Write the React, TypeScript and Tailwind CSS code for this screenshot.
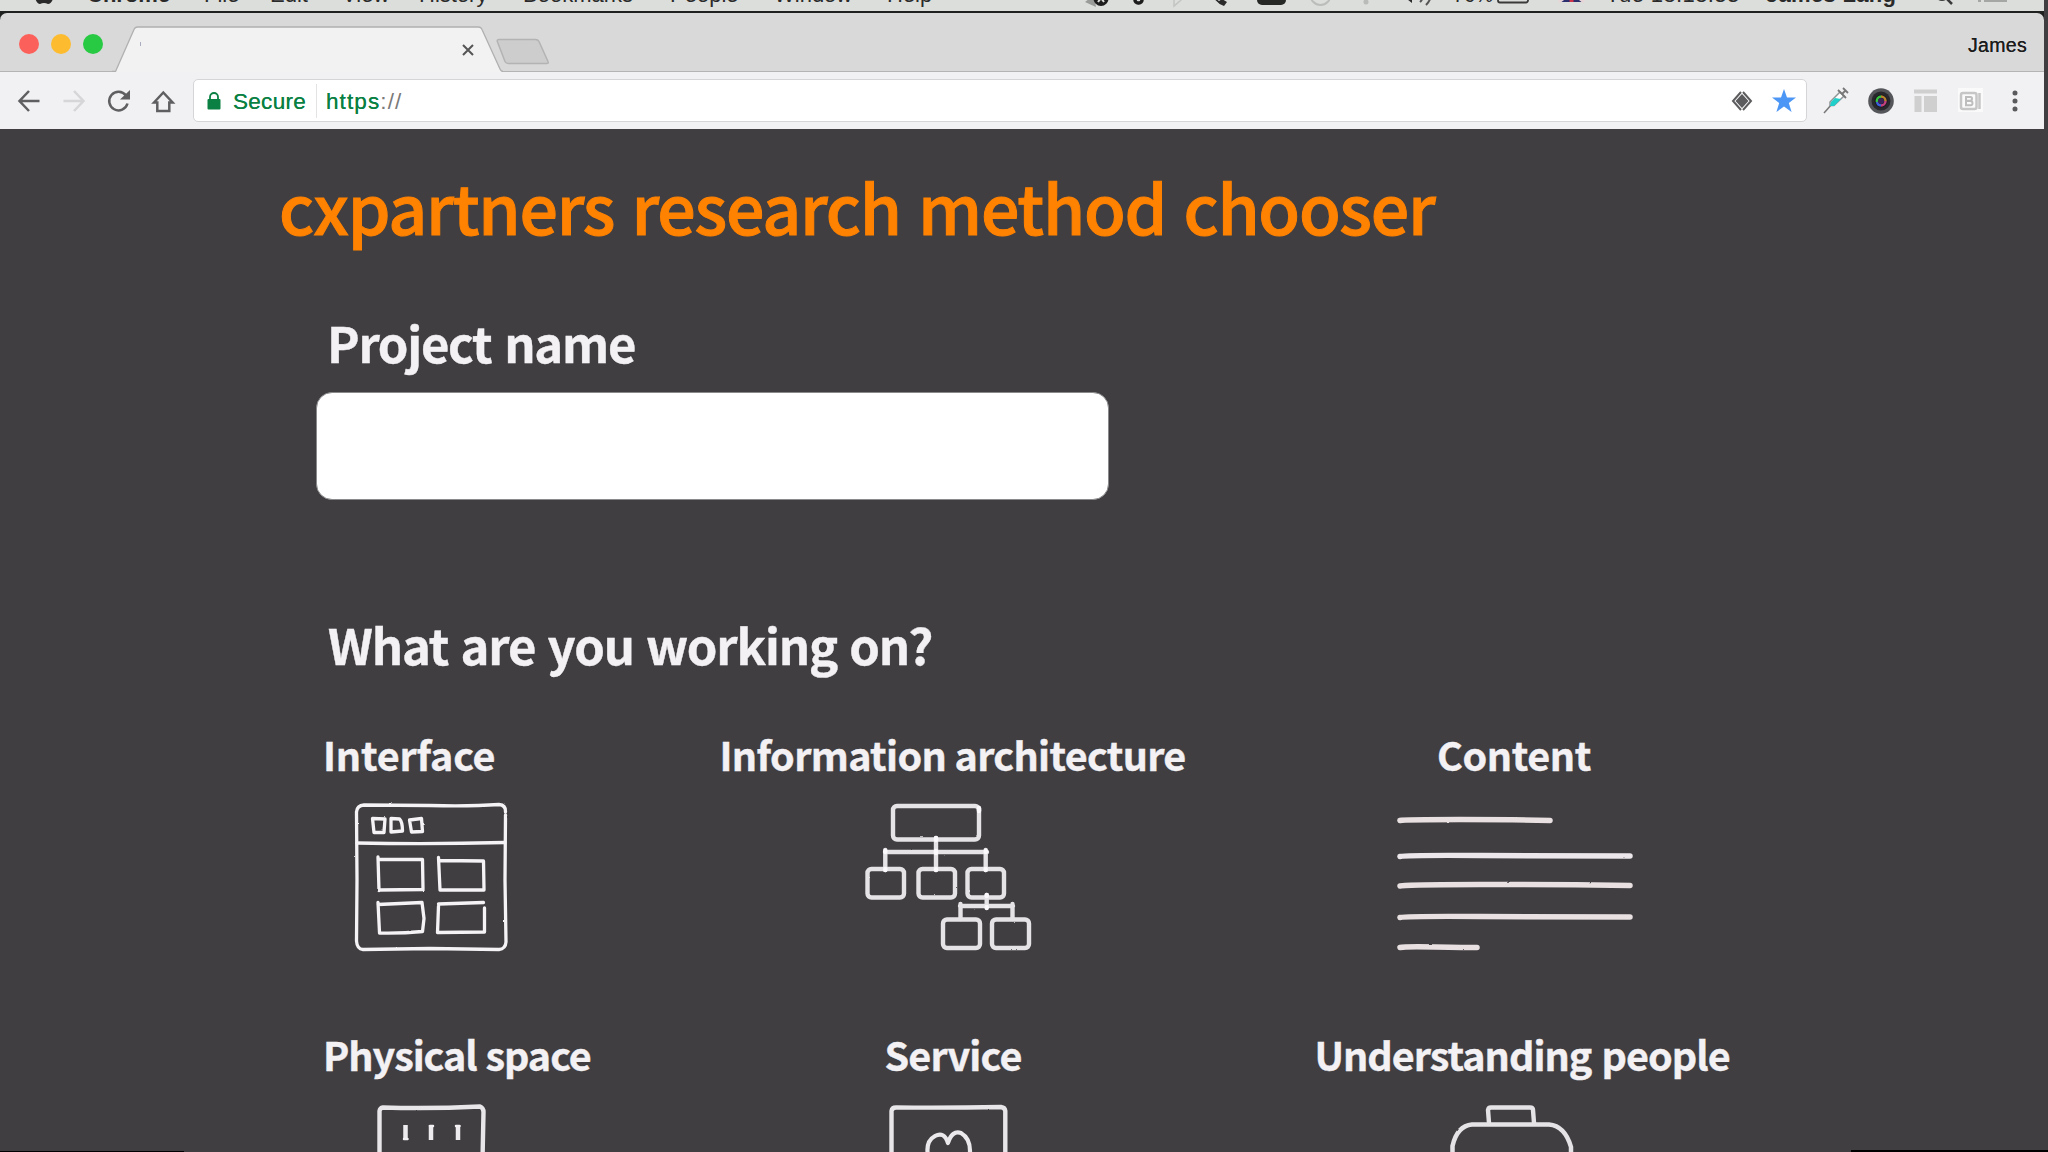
import React from 'react';
import clsx from 'clsx';

const menus = [
  { name: 'Chrome', width: 'w-[117px]', bold: true },
  { name: 'File', width: 'w-[66px]' },
  { name: 'Edit', width: 'w-[72px]' },
  { name: 'View', width: 'w-[77px]' },
  { name: 'History', width: 'w-[104px]' },
  { name: 'Bookmarks', width: 'w-[147px]' },
  { name: 'People', width: 'w-[104px]' },
  { name: 'Window', width: 'w-[113px]' },
  { name: 'Help', width: 'w-[196px]' },
];

function MenuBar() {
  return (
    <div className="h-[11px] w-[2044px] overflow-hidden bg-[#dcdedb] text-[#2a2a2a]">
      <div className="-mt-[18px] flex h-[26px] items-center text-[22px] leading-[26px] whitespace-nowrap">
        <svg className="ml-[35px] mr-[34px] h-[26px] w-[18px] shrink-0" viewBox="0 0 18 26" fill="#2a2a2a">
          <path d="M1 10q3-4 8-2q6-3 8 2q-3 5 1 7q-2 5-5 5q-2-1-4-1t-4 1q-3 0-5-6z" />
        </svg>
        {menus.map((m) => (
          <span key={m.name} className={clsx('shrink-0', m.width, m.bold && 'font-bold')}>{m.name}</span>
        ))}
        <svg className="h-[26px] w-[370px] shrink-0" viewBox="1083 -18 370 26" fill="none">
          <path d="M1085 2l9-7l2 12z" fill="#9a9c9a" />
          <circle cx="1101" cy="-1.500" r="7.500" fill="#1d1d1d" />
          <path d="M1098 2l3-4l3 4" stroke="#dcdedb" strokeWidth="2" />
          <rect x="1135" y="-9" width="7" height="12" rx="3" stroke="#1d1d1d" strokeWidth="3.500" />
          <path d="M1167-3l14-6l-7-6v21l7-6l-14-5" stroke="#c3c5c2" strokeWidth="1.500" />
          <path d="M1212-5q5 9 12 11l3-4l-5-3l-3 2q-2-1-4-5z" fill="#2a2a2a" />
          <rect x="1257" y="-14" width="29" height="19" rx="5" fill="#262826" />
          <circle cx="1320.500" cy="-5" r="10" stroke="#bbbdba" strokeWidth="2" />
          <circle cx="1366" cy="2" r="2.500" fill="#b9bbb8" />
          <path d="M1403-4l9-6v13z" fill="#2a2a2a" />
          <path d="M1420 2q4-4 3-9M1426 5q6-6 5-14" stroke="#555" strokeWidth="2" />
        </svg>
        <span className="w-[44px] shrink-0 text-[20px]">76%</span>
        <svg className="h-[26px] w-[109px] shrink-0" viewBox="1497 -18 109 26" fill="none">
          <rect x="1498" y="-11" width="30" height="13.500" rx="2" stroke="#3a3a3a" strokeWidth="1.800" />
          <path d="M1501-8h18v8h-18z" fill="#9c9e9b" />
          <path d="M1559-13h25v15h-25z" fill="#2b2f6e" />
          <path d="M1559 2l9-7M1584 2l-9-7" stroke="#e8d5d8" strokeWidth="3" />
          <path d="M1571.500-13v15" stroke="#cf3348" strokeWidth="4" />
        </svg>
        <span className="w-[160px] shrink-0 tracking-[0.400px]">Tue 18:18:33</span>
        <span className="w-[170px] shrink-0 font-bold tracking-[0.3px]">James Lang</span>
        <svg className="h-[26px] w-[74px] shrink-0" viewBox="1936 -18 74 26" fill="none">
          <circle cx="1942" cy="-6" r="6" stroke="#3a3a3a" strokeWidth="2" />
          <path d="M1946-2l6 6" stroke="#3a3a3a" strokeWidth="2.500" />
          <path d="M1978 1h3M1984 1h23" stroke="#a5a7a4" strokeWidth="2" />
        </svg>
      </div>
    </div>
  );
}

function TabStrip() {
  return (
    <div className="w-[2044px] bg-[#1f2020] pt-[2px]">
      <div className="flex h-[59px] items-center justify-between rounded-t-[7px] bg-[#d9d9d9] shadow-[inset_0_-1px_0_#b4b4b5]">
        <div className="flex h-full items-center">
          <div className="ml-[19px] flex h-full items-center gap-3 pt-[2px]">
            <span className="size-5 rounded-full bg-[#fc605b]" />
            <span className="size-5 rounded-full bg-[#fdbc2f]" />
            <span className="size-5 rounded-full bg-[#28ca43]" />
          </div>
          <svg className="ml-[9px] h-[59px] w-[442px]" viewBox="112 13 442 59" fill="none">
            <path d="M114 72L115.500 71L134 29.500Q135 27 137.500 27H478.500Q481 27 482 29.500L500 69Q501 71 503 72Z" fill="#f2f2f2" />
            <path d="M112 71.500h3.500L134 29.500Q135 27 137.500 27H478.500Q481 27 482 29.500L500 69Q501 71.500 503 71.500" stroke="#b0b0b0" strokeWidth="1.300" />
            <path d="M140.500 42v4" stroke="#a9adc0" strokeWidth="1" />
            <path d="M463 45l10 10M473 45l-10 10" stroke="#555" strokeWidth="2" />
            <path d="M499 39.500H535.500Q538 39.500 539 41.500L548 61.500Q549 63.500 546.500 63.500H508.500Q506 63.500 505 61.500L497.500 42Q496.500 39.500 499 39.500Z" fill="#cdcdcd" stroke="#b3b3b3" strokeWidth="1.500" />
          </svg>
        </div>
        <span className="mr-[17px] pt-[6px] text-[19.500px] tracking-[0.300px] text-[#1c1c1c] [text-shadow:0_0_0.500px_#1c1c1c]">James</span>
      </div>
    </div>
  );
}

function Toolbar() {
  return (
    <div className="flex h-[57px] w-[2044px] items-center bg-[#f1f1f3]">
      <svg className="h-[56px] w-[193px] shrink-0" viewBox="0 73 193 56" fill="none" stroke="#5f5f61" strokeWidth="2.500">
        <path d="M39.500 101H20M29 91l-9.500 10l9.500 10" />
        <path d="M63.500 101H83M74 91l9.500 10l-9.500 10" stroke="#d6d6d8" />
        <path d="M126 95.500a9.300 9.300 0 1 0 1.500 8" />
        <path d="M130 90v9.500h-10z" fill="#5f5f61" stroke="none" />
        <path d="M154 102.500l9.300-10l9.300 10h-3.300v8.500h-12v-8.500z" />
      </svg>
      <div className="flex h-[43px] w-[1614px] shrink-0 items-center rounded-[5px] border-[1.500px] border-[#d5d5d7] bg-white">
        <svg className="ml-[13px] h-[18px] w-[14px]" viewBox="0 0 14 18" fill="#0b8043">
          <rect x="0.500" y="7" width="13" height="10.500" rx="1" />
          <path d="M3 8V5a4 4 0 0 1 8 0v3" fill="none" stroke="#0b8043" strokeWidth="1.800" />
        </svg>
        <span className="ml-[12px] w-[83px] pt-[3px] text-[22.500px] tracking-[0.300px] text-[#0b8043] [text-shadow:0_0_0.500px_#0b8043]">Secure</span>
        <span className="h-[34px] w-px bg-[#e3e3e5]" />
        <span className="ml-[9px] pt-[3px] text-[22.500px] tracking-[1.100px] text-[#7a7a7a]"><span className="text-[#0b8043] [text-shadow:0_0_0.500px_#0b8043]">https</span>://</span>
        <svg className="mr-[9px] ml-auto h-[26px] w-[66px]" viewBox="1731 88 66 26" fill="none">
          <path d="M1741 92l-8 9l8 9M1743 92l8 9l-8 9" stroke="#5c5c5e" strokeWidth="2" />
          <path d="M1742 94l6.500 7l-6.500 7l-6.500-7z" fill="#5c5c5e" />
          <path d="M1784 89l3 8.500h9l-7.200 5.500l2.800 9l-7.600-5.400l-7.600 5.400l2.800-9l-7.200-5.500h9z" fill="#4c96f5" />
        </svg>
      </div>
      <svg className="h-[56px] w-[237px] shrink-0" viewBox="1807 73 237 56" fill="none">
        <path d="M1824 113l8-9" stroke="#777" strokeWidth="1.500" />
        <path d="M1830 102l10-10l4 4l-10 9.500h-4z" fill="#fff" stroke="#8e9698" strokeWidth="1.500" />
        <path d="M1831 102l4-4l6 1l-7 7h-4z" fill="#20cfc9" />
        <path d="M1838 90l8 8M1842 94l4-4M1843 88l5 5" stroke="#777" strokeWidth="1.800" />
        <circle cx="1881" cy="101" r="12.800" fill="#55565a" />
        <circle cx="1881" cy="101" r="9.500" fill="#29292d" />
        <circle cx="1881" cy="101" r="6.500" fill="#18181f" />
        <path d="M1877 102a4.500 4.500 0 0 1 4-5.500" stroke="#36c63d" strokeWidth="2.500" />
        <path d="M1881 96.500a4.500 4.500 0 0 1 4.500 4.500" stroke="#b8842c" strokeWidth="2.500" />
        <path d="M1885.500 101a4.500 4.500 0 0 1-4.500 4.500" stroke="#c4407e" strokeWidth="2.500" />
        <path d="M1881 105.500a4.500 4.500 0 0 1-4-3.500" stroke="#3d5fd9" strokeWidth="2.500" />
        <circle cx="1881" cy="101" r="3" fill="#3a2458" />
        <path d="M1914 89.500h23v4h-23zM1914.500 96h7v16h-7zM1924 96h13v16h-13z" fill="#cfcfd0" />
        <path d="M1958 88h25v24h-25z" fill="#fafafa" />
        <rect x="1961" y="93" width="15.500" height="16" rx="2" stroke="#c6c6c7" strokeWidth="2.500" />
        <path d="M1979.500 93v16" stroke="#c6c6c7" strokeWidth="2.500" />
        <path d="M1966 97h4.500q1.500 0 1.500 1.800t-2 1.900h-4zm0 4h4.500q2 0 2 2.200t-2 2h-4.500z" stroke="#bdbdbe" strokeWidth="2" />
        <path d="M2015 90.500a2.500 2.500 0 0 1 0 5a2.500 2.500 0 0 1 0-5M2015 98.500a2.500 2.500 0 0 1 0 5a2.500 2.500 0 0 1 0-5M2015 106.500a2.500 2.500 0 0 1 0 5a2.500 2.500 0 0 1 0-5" fill="#5a5a5c" />
      </svg>
    </div>
  );
}

interface SketchProps {
  className: string;
  viewBox: string;
  children: React.ReactNode;
}

// chalk style drawing, edges are roughened a little
function Sketch({ className, viewBox, children }: SketchProps) {
  return (
    <svg className={className} viewBox={viewBox} fill="none" strokeLinecap="round" strokeLinejoin="round">
      <defs>
        <filter id="chalk" x="-5%" y="-5%" width="110%" height="110%">
          <feTurbulence type="fractalNoise" baseFrequency="0.15" numOctaves="2" seed="4" />
          <feDisplacementMap in="SourceGraphic" scale="1.600" xChannelSelector="R" yChannelSelector="G" />
        </filter>
      </defs>
      <g filter="url(#chalk)">{children}</g>
    </svg>
  );
}

function InterfaceIcon() {
  return (
    <Sketch className="ml-[25px] h-[158px] w-[162px]" viewBox="350 798 162 158">
      <g stroke="#f5f3f5" strokeWidth="3.300">
        <path d="M505.500 812Q506 805 499 804.500Q470 806.500 430 805.500L364 805Q357 805.500 356.500 812L357 880L356.500 941Q357 949 363 949.500L430 948.500L499 949.500Q505.500 949 506 942L505 880L505.500 815" />
        <path d="M357 843Q430 844.500 505 842.500" />
        <path d="M372.500 818.500l1.500 14h10l1-13.500zM391 818.500v13.500l11.500-1q0-9-3-12zM409.500 820l2 12l11-.500l-1-13z" />
        <path d="M378 857l1 33.500M378 859.500h44.500l.5 30l-44 .5M438.500 857.500l1.500 32.500M439 860.500l44.500.5l.5 29h-44" />
        <path d="M378 902.500l1.500 30M378 904.500l44-2l2 16l-1.500 13q-21 2-43 1.500M438.500 906l-1 26.500l47-.500v-24M438.500 904l45-1.500" />
      </g>
    </Sketch>
  );
}

function ArchitectureIcon() {
  return (
    <Sketch className="h-[158px] w-[178px]" viewBox="859 798 178 158">
      <g stroke="#e6e3e6" strokeWidth="4.400">
        <rect x="893" y="806" width="86" height="33.500" rx="4" />
        <path d="M885 852h102M936 838v32M885.300 850v20M985.700 850v20" />
        <rect x="867.500" y="869" width="36.500" height="28.500" rx="4" />
        <rect x="918.500" y="869" width="36.500" height="28.500" rx="4" />
        <rect x="967.500" y="869" width="36.500" height="28.500" rx="4" />
        <path d="M986.700 895v12M960 906h53M960.500 904v15M1012.500 904v15" />
        <rect x="943" y="919.500" width="37" height="28.500" rx="4" />
        <rect x="992" y="919.500" width="37" height="28.500" rx="4" />
      </g>
      <path d="M936 838v2M885.300 851v1M985.700 851v1M936 851v2M885.300 869v1M936 869v1M985.700 869v1M986.700 895v1M986.700 907v1M979 808v3" stroke="#fbf9fb" strokeWidth="4.500" />
    </Sketch>
  );
}

function ContentIcon() {
  return (
    <Sketch className="h-[158px] w-[244px]" viewBox="1392 798 244 158">
      <g stroke="#e8e0e1" strokeWidth="5.500">
        <path d="M1400 820.500q4-1 60-1t90 1" />
        <path d="M1400 856.500q8-1.500 80-1t150 .5" stroke="#ebe7ea" />
        <path d="M1400 886q8-1.500 80-1.500t150 1" />
        <path d="M1400 917.500q8-1.500 80-1t150 .5" />
        <path d="M1400 947.500q4-1 35-.5t42 .5" />
      </g>
    </Sketch>
  );
}

function SpaceIcon() {
  return (
    <Sketch className="ml-[45px] h-[60px] w-[122px]" viewBox="370 1100 122 60">
      <path d="M379.500 1160V1111Q380 1108 383 1107.500Q430 1109 480 1106.500Q483.500 1108 483.500 1112L482.500 1160" stroke="#e9e6e9" strokeWidth="4.400" />
      <path d="M405.500 1125v15M431 1125v15M458 1125v15" stroke="#eeebee" strokeWidth="4.500" strokeLinecap="butt" />
      <path d="M404 1139h3.500M430 1126h3M456 1126h3.500" stroke="#f3f1f3" strokeWidth="2.500" />
    </Sketch>
  );
}

function ServiceIcon() {
  return (
    <Sketch className="h-[60px] w-[134px]" viewBox="881 1100 134 60">
      <path d="M891.500 1160V1111Q892 1107.500 896 1107.500Q950 1108 1001 1107Q1005 1107.500 1005.300 1111V1160" stroke="#e9e6e9" strokeWidth="4.400" />
      <path d="M929 1160Q924 1142 935 1136Q944 1131 948 1143Q952 1130 961 1133Q973 1140 969 1160" stroke="#ece9ec" strokeWidth="4.200" />
    </Sketch>
  );
}

function PeopleIcon() {
  return (
    <Sketch className="h-[60px] w-[138px]" viewBox="1443 1100 138 60">
      <path d="M1489 1123L1488 1110Q1488.500 1107 1492 1107.500H1530Q1533 1107.500 1533 1110L1534 1123" stroke="#e6e3e6" strokeWidth="4.400" />
      <path d="M1452.500 1160V1146Q1457 1126 1472 1124.500H1549Q1565 1126 1571 1147V1160" stroke="#e6e3e6" strokeWidth="4.500" />
    </Sketch>
  );
}

export default function App() {
  return (
    <div className="relative h-[1152px] w-[2048px] overflow-hidden bg-[#403e41] font-['Liberation_Sans',sans-serif]">
      <header>
        <MenuBar />
        <TabStrip />
        <Toolbar />
      </header>

      <main className="pt-[43px] font-['Noto_Sans_CJK_SC',sans-serif] leading-none font-bold whitespace-nowrap text-[#f3f1f4] [-webkit-text-stroke:0.400px_#f3f1f4]">
        <h1 className="ml-[279px] h-[68px] text-[68px] leading-[68px] font-medium tracking-[-1.260px] [word-spacing:3.300px] text-[#ff8200] [-webkit-text-stroke:1px_#ff8200]">
          cxpartners research method chooser
        </h1>

        <label className="mt-[77px] ml-[327px] block h-[49px] text-[49px] leading-[49px] tracking-[-1.300px] [word-spacing:3px]">Project name</label>
        <div className="mt-[26px] ml-[316px] h-[108px] w-[793px] rounded-[16px] border border-[#8a898b] bg-white" />

        <h2 className="mt-[119px] ml-[328px] h-[49px] text-[49px] leading-[49px] tracking-[-1.150px] [word-spacing:2.300px]">What are you working on?</h2>

        <section className="mt-[66px] ml-[325px] flex h-[300px] text-[39.500px] leading-[40px]">
          <div className="w-[397px]">
            <h3 className="-ml-[2px] mb-[24px] tracking-[-0.200px]">Interface</h3>
            <InterfaceIcon />
          </div>
          <div className="flex w-[463px] flex-col items-center">
            <h3 className="mr-[2px] mb-[24px] tracking-[-0.650px]">Information architecture</h3>
            <div className="mr-[11px]"><ArchitectureIcon /></div>
          </div>
          <div className="ml-[132px] flex w-[394px] flex-col items-center">
            <h3 className="mb-[24px] tracking-[-0.400px]">Content</h3>
            <ContentIcon />
          </div>
        </section>

        <section className="ml-[325px] flex h-[118px] overflow-hidden text-[39.500px] leading-[40px]">
          <div className="w-[397px]">
            <h3 className="-ml-[2px] mb-[26px] tracking-[-1.050px] [word-spacing:1px]">Physical space</h3>
            <SpaceIcon />
          </div>
          <div className="flex w-[463px] flex-col items-center">
            <h3 className="mr-px mb-[26px] tracking-[-0.800px]">Service</h3>
            <div className="mr-[11px]"><ServiceIcon /></div>
          </div>
          <div className="ml-[132px] flex w-[412px] flex-col items-center">
            <h3 className="mr-[2px] mb-[26px] tracking-[-0.960px] [word-spacing:2px]">Understanding people</h3>
            <div className="mr-[23px]"><PeopleIcon /></div>
          </div>
        </section>
      </main>

      <div className="absolute bottom-0 left-0 h-px w-[184px] bg-black" />
      <div className="absolute right-0 bottom-0 h-[2px] w-[197px] bg-black" />
    </div>
  );
}
